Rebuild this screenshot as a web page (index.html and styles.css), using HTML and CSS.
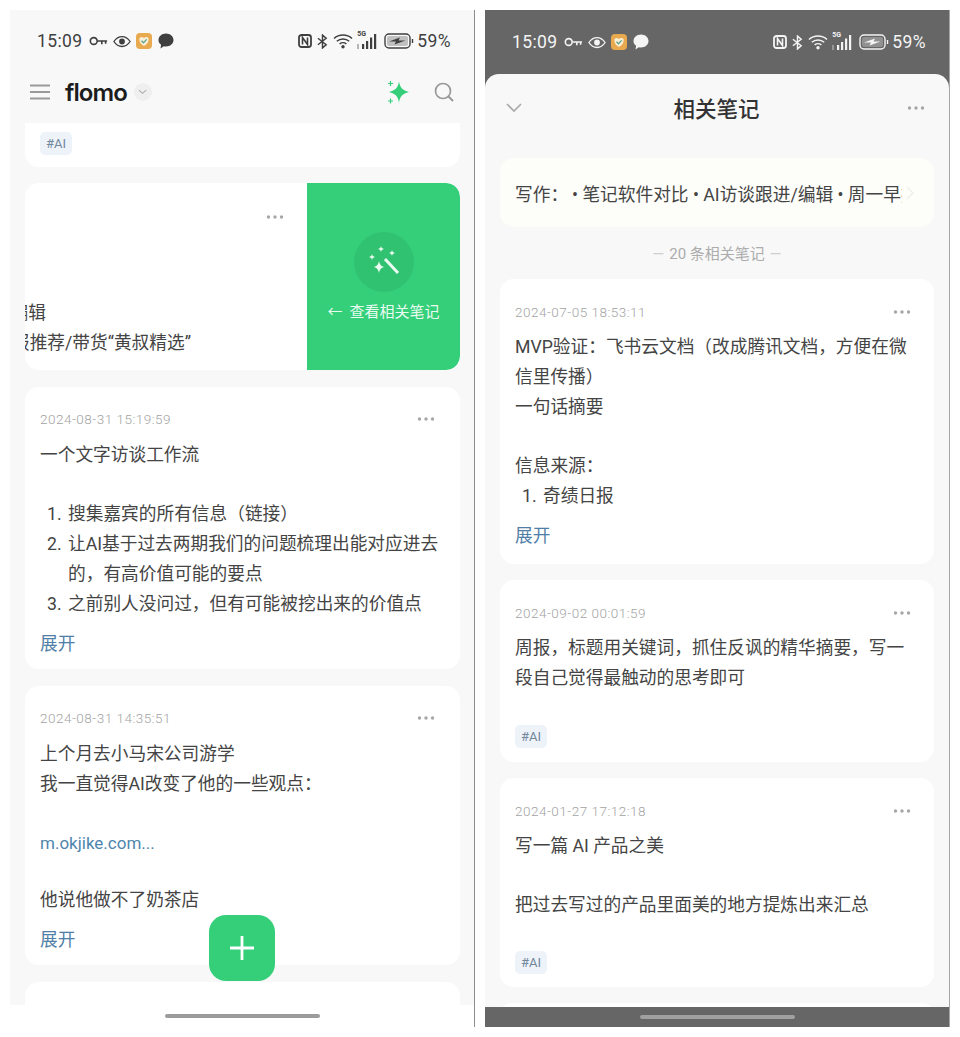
FILE: index.html
```html
<!DOCTYPE html>
<html lang="zh-CN">
<head>
    <meta charset="UTF-8">
    <meta name="viewport" content="width=device-width, initial-scale=1.0">
    <title>flomo</title>
    <link rel="stylesheet" href="styles.css">
</head>
<body>
    <svg class="sprite" aria-hidden="true">
        <symbol id="i-key" viewBox="0 0 20 12"><circle cx="5" cy="6" r="3.6" fill="none" stroke="currentColor" stroke-width="1.7"/><path d="M9 6h10M13.5 6v3.5M17.5 6v3" fill="none" stroke="currentColor" stroke-width="1.7"/></symbol>
        <symbol id="i-eye" viewBox="0 0 20 14"><path d="M1 7c2.500-3.800 5.500-5.500 9-5.500s6.500 1.700 9 5.500c-2.500 3.800-5.500 5.500-9 5.500S3.500 10.800 1 7z" fill="none" stroke="currentColor" stroke-width="1.500"/><circle cx="10" cy="7" r="3.200" fill="currentColor"/></symbol>
        <symbol id="i-chat" viewBox="0 0 16 16"><path d="M8 .5c4.200 0 7.500 2.900 7.500 6.500S12.200 13.500 8 13.500c-.8 0-1.500-.1-2.200-.3L2.500 15.500l.6-3.700C1.400 10.600.5 8.900.5 7 .5 3.400 3.800.5 8 .5z" fill="currentColor"/></symbol>
        <symbol id="i-nfc" viewBox="0 0 14 14"><rect x="1" y="1" width="12" height="12" rx="2.500" fill="none" stroke="currentColor" stroke-width="1.800"/><path d="M4.500 10.500V3.500l5 7V3.500" fill="none" stroke="currentColor" stroke-width="1.600"/></symbol>
        <symbol id="i-bt" viewBox="0 0 12 16"><path d="M1 4.500l9 7-4 3.500V1l4 3.500-9 7" fill="none" stroke="currentColor" stroke-width="1.600"/></symbol>
        <symbol id="i-wifi" viewBox="0 0 20 16"><path d="M1 5.500c5-4.700 13-4.700 18 0M3.800 8.300c3.400-3.100 9-3.100 12.400 0M6.600 11c1.900-1.600 4.900-1.600 6.800 0" fill="none" stroke="currentColor" stroke-width="1.500"/><circle cx="10" cy="13.800" r="1.700" fill="currentColor"/></symbol>
        <symbol id="i-signal" viewBox="0 0 22 16"><rect x="6" y="11" width="2.200" height="5" fill="currentColor"/><rect x="10" y="8" width="2.200" height="8" fill="currentColor"/><rect x="14" y="4.500" width="2.200" height="11.500" fill="currentColor"/><rect x="18" y="1" width="2.200" height="15" fill="currentColor"/><rect x="1" y="11" width="2" height="5" fill="currentColor" opacity=".35"/></symbol>
        <symbol id="i-battery" viewBox="0 0 30 16"><rect x="1" y="1" width="25" height="14" rx="4" fill="none" stroke="currentColor" stroke-width="1.400"/><rect x="3" y="3" width="21" height="10" rx="2" fill="currentColor" opacity=".3"/><path d="M5 8.500l11-4-1.500 3h7l-11 4 1.500-3z" fill="currentColor"/><path d="M28.500 6v4" stroke="currentColor" stroke-width="1.400"/></symbol>
        <symbol id="i-app" viewBox="0 0 16 16"><rect width="16" height="16" rx="4" fill="#e8a94f"/><path d="M3.500 5c1.500-1.500 3-1.200 4.500 0 1.500-1.200 3-1.500 4.500 0 .7 3.500-1.500 6.500-4.500 8-3-1.500-5.200-4.500-4.500-8z" fill="#fbeed8"/><path d="M5.500 7.800l2 2 3.200-3.400" fill="none" stroke="#5aa58d" stroke-width="1.300"/></symbol>
        <symbol id="i-more" viewBox="0 0 18 4"><circle cx="2.500" cy="2" r="1.700" fill="currentColor"/><circle cx="9" cy="2" r="1.700" fill="currentColor"/><circle cx="15.500" cy="2" r="1.700" fill="currentColor"/></symbol>
    </svg>

    <div class="screen">
        <section class="phone phone-list">
            <div class="status">
                <div class="status-side">
                    <span class="time">15:09</span>
                    <svg class="ic-key"><use href="#i-key"/></svg>
                    <svg class="ic-eye"><use href="#i-eye"/></svg>
                    <svg class="ic-app"><use href="#i-app"/></svg>
                    <svg class="ic-chat"><use href="#i-chat"/></svg>
                </div>
                <div class="status-side status-right">
                    <svg class="ic-nfc"><use href="#i-nfc"/></svg>
                    <svg class="ic-bt"><use href="#i-bt"/></svg>
                    <svg class="ic-wifi"><use href="#i-wifi"/></svg>
                    <span class="net"><b>5G</b><svg class="ic-signal"><use href="#i-signal"/></svg></span>
                    <svg class="ic-battery"><use href="#i-battery"/></svg>
                    <span class="percent">59%</span>
                </div>
            </div>

            <header class="topbar">
                <svg class="menu" viewBox="0 0 20 16"><path d="M0 1.500h20M0 8h20M0 14.500h20" stroke="#999" stroke-width="2.200"/></svg>
                <span class="logo">flomo</span>
                <span class="logo-arrow"><svg viewBox="0 0 10 6"><path d="M1 1l4 3.500L9 1" fill="none" stroke="#aaa" stroke-width="1.200"/></svg></span>
                <svg class="spark" viewBox="0 0 22 24"><path d="M12 1.500c1 6 3.500 9 10 10.500-6.500 1.500-9 4.500-10 10.500-1-6-3.500-9-10-10.500 6.500-1.500 9-4.500 10-10.500z" fill="#35cf7a"/><path d="M3.500 1v5M1 3.500h5M3.500 18.500v5M1 21h5" stroke="#35cf7a" stroke-width="1.200"/></svg>
                <svg class="search" viewBox="0 0 20 20"><circle cx="9" cy="9" r="7.500" fill="none" stroke="#999" stroke-width="1.700"/><path d="M14.500 14.500l4.500 4.500" stroke="#999" stroke-width="1.900"/></svg>
            </header>

            <div class="list">
                <article class="card card-tag">
                    <span class="tag">#AI</span>
                </article>

                <article class="card card-swipe">
                    <div class="swipe-body">
                        <svg class="more swipe-more"><use href="#i-more"/></svg>
                        <div class="swipe-line line-short">AI访谈跟进/编辑</div>
                        <div class="swipe-line line-long">周一早报推荐/带货“黄叔精选”</div>
                    </div>
                    <div class="swipe-action">
                        <span class="wand">
                            <svg viewBox="0 0 36 36"><path d="M19 15l13 14" stroke="#eafbf1" stroke-width="3"/><path d="M13 17c.7 3.500 2 5.300 5.500 6-3.500.7-4.800 2.500-5.500 6-.7-3.500-2-5.300-5.500-6 3.500-.7 4.800-2.500 5.500-6zM15 2c.4 1.800 1.200 2.600 3 3-1.800.4-2.600 1.200-3 3-.4-1.800-1.200-2.600-3-3 1.800-.4 2.600-1.200 3-3zM6 10c.4 1.800 1.200 2.600 3 3-1.800.4-2.600 1.200-3 3-.4-1.800-1.200-2.600-3-3 1.800-.4 2.600-1.200 3-3zM26 6c.4 1.800 1.200 2.600 3 3-1.800.4-2.600 1.200-3 3-.4-1.800-1.200-2.600-3-3 1.800-.4 2.600-1.200 3-3z" fill="#eafbf1"/></svg>
                        </span>
                        <span class="action-text"><span class="action-arrow">←</span>查看相关笔记</span>
                    </div>
                </article>

                <article class="card">
                    <div class="meta"><span class="date">2024-08-31 15:19:59</span><svg class="more"><use href="#i-more"/></svg></div>
                    <p>一个文字访谈工作流</p>
                    <p class="blank"></p>
                    <ol>
                        <li>搜集嘉宾的所有信息（链接）</li>
                        <li>让AI基于过去两期我们的问题梳理出能对应进去的，有高价值可能的要点</li>
                        <li>之前别人没问过，但有可能被挖出来的价值点</li>
                    </ol>
                    <a class="expand">展开</a>
                </article>

                <article class="card">
                    <div class="meta"><span class="date">2024-08-31 14:35:51</span><svg class="more"><use href="#i-more"/></svg></div>
                    <p>上个月去小马宋公司游学</p>
                    <p>我一直觉得AI改变了他的一些观点：</p>
                    <p class="blank"></p>
                    <p class="link">m.okjike.com...</p>
                    <p class="blank blank-tight"></p>
                    <p>他说他做不了奶茶店</p>
                    <a class="expand">展开</a>
                </article>

                <article class="card card-cut"></article>
            </div>

            <div class="navbar"><span class="handle"></span></div>

            <button class="fab"><svg viewBox="0 0 26 26"><path d="M13 1v24M1 13h24" stroke="#fff" stroke-width="2.800"/></svg></button>
        </section>

        <section class="phone phone-related">
            <div class="status status-dark">
                <div class="status-side">
                    <span class="time">15:09</span>
                    <svg class="ic-key"><use href="#i-key"/></svg>
                    <svg class="ic-eye"><use href="#i-eye"/></svg>
                    <svg class="ic-app"><use href="#i-app"/></svg>
                    <svg class="ic-chat"><use href="#i-chat"/></svg>
                </div>
                <div class="status-side status-right">
                    <svg class="ic-nfc"><use href="#i-nfc"/></svg>
                    <svg class="ic-bt"><use href="#i-bt"/></svg>
                    <svg class="ic-wifi"><use href="#i-wifi"/></svg>
                    <span class="net"><b>5G</b><svg class="ic-signal"><use href="#i-signal"/></svg></span>
                    <svg class="ic-battery"><use href="#i-battery"/></svg>
                    <span class="percent">59%</span>
                </div>
            </div>

            <div class="sheet">
                <header class="sheet-head">
                    <svg class="sheet-close" viewBox="0 0 16 10"><path d="M1 1l7 7 7-7" fill="none" stroke="#aaa" stroke-width="1.600"/></svg>
                    <h2>相关笔记</h2>
                    <svg class="more"><use href="#i-more"/></svg>
                </header>

                <div class="topic">
                    <span class="topic-label">写作：</span>
                    <span class="topic-scroll">• 笔记软件对比 • AI访谈跟进/编辑 • 周一早报推荐</span>
                    <svg class="topic-arrow" viewBox="0 0 8 14"><path d="M1 1l6 6-6 6" fill="none" stroke="#eeeeea" stroke-width="1.400"/></svg>
                </div>

                <div class="count"><span class="dash">—</span>20 条相关笔记<span class="dash">—</span></div>

                <div class="list list-related">
                    <article class="card">
                        <div class="meta"><span class="date">2024-07-05 18:53:11</span><svg class="more"><use href="#i-more"/></svg></div>
                        <p>MVP验证：飞书云文档（改成腾讯文档，方便在微信里传播）</p>
                        <p>一句话摘要</p>
                        <p class="blank"></p>
                        <p>信息来源：</p>
                        <ol><li>奇绩日报</li></ol>
                        <a class="expand">展开</a>
                    </article>

                    <article class="card">
                        <div class="meta"><span class="date">2024-09-02 00:01:59</span><svg class="more"><use href="#i-more"/></svg></div>
                        <p>周报，标题用关键词，抓住反讽的精华摘要，写一段自己觉得最触动的思考即可</p>
                        <div class="tag-row"><span class="tag">#AI</span></div>
                    </article>

                    <article class="card">
                        <div class="meta"><span class="date">2024-01-27 17:12:18</span><svg class="more"><use href="#i-more"/></svg></div>
                        <p>写一篇 AI 产品之美</p>
                        <p class="blank"></p>
                        <p>把过去写过的产品里面美的地方提炼出来汇总</p>
                        <div class="tag-row tag-row-tight"><span class="tag">#AI</span></div>
                    </article>

                    <article class="card card-stub"></article>
                </div>
            </div>

            <div class="navbar navbar-dark"><span class="handle"></span></div>
        </section>
    </div>
</body>
</html>
```

FILE: styles.css
```css
* {
    box-sizing: border-box;
}
body {
    margin: 0;
    background: #fff;
    font-family: "Roboto", "Noto Sans CJK SC", sans-serif;
    color: #444;
}
.sprite {
    position: absolute;
    width: 0;
    height: 0;
}
.screen {
    display: flex;
    gap: 10px;
    padding: 10px 0 0 10px;
    width: 960px;
    height: 1037px;
}
.phone {
    position: relative;
    display: flex;
    flex-direction: column;
    width: 465px;
    height: 1017px;
    overflow: hidden;
    background: #f8f8f8;
}
.phone-list {
    border-right: 1px solid #8c8c8c;
}
.phone-related {
    background: #666;
    border-right: 1px solid #a5a5a5;
}

/* status bar */
.status {
    display: flex;
    justify-content: space-between;
    align-items: center;
    height: 62px;
    padding: 0 23px 0 27px;
    flex-shrink: 0;
    color: #3f3f3f;
}
.status-dark {
    height: 64px;
    color: #f4f4f4;
}
.status-side {
    display: flex;
    align-items: center;
    gap: 5px;
}
.status-right {
    gap: 3px;
}
.time, .percent {
    font-size: 17.500px;
    letter-spacing: 0.4px;
}
.time {
    margin-right: 1px;
}
.ic-key { width: 19px; height: 12px; }
.ic-eye { width: 18px; height: 13px; }
.ic-app { width: 16px; height: 16px; }
.ic-chat { width: 16px; height: 16px; margin-left: 1px; }
.ic-nfc { width: 14px; height: 14px; margin-right: 2px; }
.ic-bt { width: 11px; height: 15px; margin-right: 2px; }
.ic-wifi { width: 20px; height: 16px; }
.ic-signal { width: 22px; height: 16px; }
.ic-battery { width: 30px; height: 16px; margin-left: 3px; }
.net {
    position: relative;
    display: flex;
    align-items: center;
}
.net b {
    position: absolute;
    left: 1px;
    top: -3px;
    font-size: 7px;
    line-height: 8px;
}

/* top bar */
.topbar {
    display: flex;
    align-items: center;
    height: 40px;
    padding: 0 20px;
    flex-shrink: 0;
}
.menu {
    width: 20px;
    height: 16px;
}
.logo {
    margin-left: 15px;
    font-family: "Inter", sans-serif;
    font-size: 24px;
    font-weight: 600;
    letter-spacing: -0.9px;
    color: #1c1c1c;
}
.logo-arrow {
    display: flex;
    align-items: center;
    justify-content: center;
    width: 18px;
    height: 18px;
    margin-left: 7px;
    border-radius: 50%;
    background: #efefef;
}
.logo-arrow svg {
    width: 9px;
    height: 6px;
}
.spark {
    width: 22px;
    height: 24px;
    margin-left: auto;
}
.search {
    width: 20px;
    height: 20px;
    margin-left: 25px;
}

/* cards */
.list {
    display: flex;
    flex-direction: column;
    gap: 17px;
    padding: 0 15px;
    flex: 1;
    min-height: 0;
    overflow: hidden;
}
.phone-list .list {
    padding: 11px 14px 0 15px;
}
.card {
    flex-shrink: 0;
    padding: 22px 15px 0;
    background: #fff;
    border-radius: 14px;
    font-size: 17.700px;
    line-height: 30px;
}
.card p {
    margin: 0;
}
.card .blank {
    height: 29px;
}
.card .blank-tight {
    height: 27px;
}
.meta {
    display: flex;
    justify-content: space-between;
    align-items: center;
    height: 20px;
    margin-bottom: 11px;
}
.date {
    font-size: 13.500px;
    font-weight: 300;
    letter-spacing: 0.5px;
    color: #a3a3a3;
}
.more {
    width: 18px;
    height: 4px;
    color: #a6a6a6;
    margin-right: 10px;
}
ol {
    margin: 0;
    padding: 0 0 0 28px;
    list-style: none;
    counter-reset: num;
}
li {
    counter-increment: num;
}
li::before {
    content: counter(num) ".";
    display: inline-block;
    box-sizing: border-box;
    width: 28px;
    margin-left: -28px;
    padding-left: 7px;
}
.expand {
    display: block;
    margin-top: 10px;
    color: #4f7ea6;
}
.link {
    color: #4f86ad;
    font-size: 17px;
}
.tag {
    display: inline-block;
    height: 23px;
    padding: 0 6px;
    border-radius: 5px;
    background: #eef3fa;
    color: #71879c;
    font-size: 13px;
    line-height: 23px;
}

/* left list */
.card-tag {
    height: 44px;
    padding: 9px 15px 0;
    border-radius: 0 0 14px 14px;
    line-height: 0;
}
.card-swipe {
    display: flex;
    height: 187px;
    margin-top: -1px;
    padding: 0;
    overflow: hidden;
}
.swipe-body {
    display: flex;
    flex-direction: column;
    flex: 1;
    min-width: 0;
    overflow: hidden;
}
.swipe-more {
    align-self: flex-end;
    margin: 32px 23px 79px 0;
}
.swipe-line {
    display: flex;
    justify-content: flex-end;
    white-space: nowrap;
}
.line-short {
    width: 21px;
}
.line-long {
    width: 166px;
}
.swipe-action {
    display: flex;
    flex-direction: column;
    align-items: center;
    width: 153px;
    padding-top: 49px;
    background: #35cf7a;
    border-radius: 0 14px 14px 0;
    color: #eafbf1;
}
.wand {
    display: flex;
    align-items: center;
    justify-content: center;
    width: 60px;
    height: 60px;
    border-radius: 50%;
    background: #30c271;
}
.wand svg {
    width: 36px;
    height: 36px;
}
.action-text {
    margin-top: 5px;
    font-size: 15px;
    white-space: nowrap;
}
.action-arrow {
    margin-right: 7px;
}
.card-cut {
    height: 40px;
}
.phone-list .card:nth-child(3) {
    height: 282px;
}
.phone-list .card:nth-child(4) {
    height: 279px;
}
.navbar {
    display: flex;
    justify-content: center;
    align-items: center;
    height: 22px;
    flex-shrink: 0;
    background: #fff;
}
.handle {
    width: 155px;
    height: 4px;
    border-radius: 2px;
    background: #9b9b9b;
}
.navbar-dark {
    height: 20px;
    background: #666;
}
.navbar-dark .handle {
    background: #a0a0a0;
}
.fab {
    position: absolute;
    left: 199px;
    top: 905px;
    display: flex;
    align-items: center;
    justify-content: center;
    width: 66px;
    height: 66px;
    padding: 0;
    border: none;
    border-radius: 17px;
    background: #35cf7a;
}
.fab svg {
    width: 26px;
    height: 26px;
}

/* related sheet */
.sheet {
    display: flex;
    flex-direction: column;
    flex: 1;
    min-height: 0;
    background: #f8f8f8;
    border-radius: 14px 14px 0 0;
}
.sheet-head {
    display: flex;
    align-items: center;
    justify-content: space-between;
    height: 72px;
    padding: 0 24px 5px 21px;
    flex-shrink: 0;
}
.sheet-close {
    width: 16px;
    height: 10px;
}
.sheet-head h2 {
    margin: 0 0 0 4px;
    font-size: 21.500px;
    font-weight: 500;
    color: #333;
}
.sheet-head .more {
    margin: 0;
}
.topic {
    display: flex;
    align-items: center;
    height: 69px;
    margin: 12px 15px 0;
    padding: 0 15px;
    border-radius: 14px;
    background: #fdfdfa;
    font-size: 17.700px;
    flex-shrink: 0;
}
.topic-label {
    flex-shrink: 0;
    margin-right: 4px;
}
.topic-scroll {
    width: 330px;
    overflow: hidden;
    white-space: nowrap;
    flex-shrink: 0;
}
.topic-arrow {
    width: 8px;
    height: 14px;
    margin-left: 4px;
}
.count {
    height: 52px;
    line-height: 55px;
    flex-shrink: 0;
    text-align: center;
    font-size: 15px;
    color: #acacac;
}
.dash {
    margin: 0 5px;
    color: #cfcfcf;
}
.list-related {
    gap: 16px;
}
.list-related .meta {
    margin-bottom: 11px;
    padding-top: 2px;
}
.list-related .more {
    margin-right: 8px;
}
.list-related .card:nth-child(1) {
    height: 285px;
}
.list-related .card:nth-child(2) {
    height: 182px;
}
.list-related .card:nth-child(3) {
    height: 209px;
}
.tag-row {
    display: flex;
    margin-top: 32px;
}
.tag-row-tight {
    margin-top: 31px;
}
.card-stub {
    height: 20px;
}
```
